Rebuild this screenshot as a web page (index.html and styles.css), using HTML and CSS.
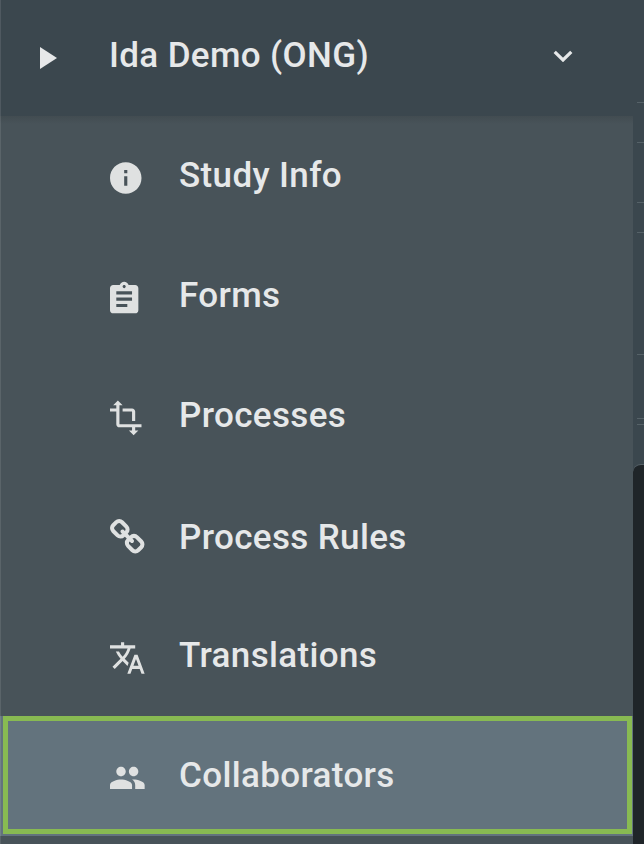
FILE: index.html
```html
<!DOCTYPE html>
<html lang="en">
  <head>
    <meta charset="UTF-8" />
    <meta name="viewport" content="width=device-width, initial-scale=1.0" />
    <title>Ida Demo (ONG)</title>
    <link rel="stylesheet" href="styles.css">
  </head>
  <body>
    <div class="sidebar">
      <header class="study">
        <svg class="study-arrow" viewBox="0 0 17 22"><path d="M0 0L17 11L0 22z" /></svg>
        <span class="study-name">Ida Demo (ONG)</span>
        <svg class="study-toggle" viewBox="0 0 20 12"><path d="M1.7 1.8L10 10L18.3 1.8" /></svg>
      </header>
      <nav class="menu">
        <a class="item">
          <svg class="icon" viewBox="2 0 24 24"><path d="M12 2C6.48 2 2 6.48 2 12s4.48 10 10 10 10-4.48 10-10S17.52 2 12 2zm1 15h-2v-6h2v6zm0-8h-2V7h2v2z" /></svg>
          <span class="label">Study Info</span>
        </a>
        <a class="item">
          <svg class="icon" viewBox="3 -0.8 24 24"><path d="M19 3h-4.18C14.4 1.84 13.3 1 12 1c-1.3 0-2.4.84-2.82 2H5c-1.1 0-2 .9-2 2v14c0 1.1.9 2 2 2h14c1.1 0 2-.9 2-2V5c0-1.1-.9-2-2-2zm-7 0c.55 0 1 .45 1 1s-.45 1-1 1-1-.45-1-1 .45-1 1-1zm2 14H7v-2h7v2zm3-4H7v-2h10v2zm0-4H7V7h10v2z" /></svg>
          <span class="label">Forms</span>
        </a>
        <a class="item">
          <svg class="icon" viewBox="2 0 24 24"><path d="M22 18v-2H8V4h2L7 1 4 4h2v2H2v2h4v8c0 1.1.9 2 2 2h8v2h-2l3 3 3-3h-2v-2h4zM10 8h6v6h2V8c0-1.1-.9-2-2-2h-6v2z" /></svg>
          <span class="label">Processes</span>
        </a>
        <a class="item rules">
          <svg class="icon" viewBox="16 16 1790 1790"><path d="M1456 1216q0-40-28-68l-208-208q-28-28-68-28-42 0-72 32 3 3 19 18.500t21.500 21.500 15 19 13 25.500 3.500 27.500q0 40-28 68t-68 28q-15 0-27.500-3.500t-25.500-13-19-15-21.500-21.500-18.500-19q-33 31-33 73 0 40 28 68l206 207q27 27 68 27 40 0 68-26l147-146q28-28 28-67zm-703-705q0-40-28-68l-206-207q-28-28-68-28-39 0-68 27l-147 146q-28 28-28 67 0 40 28 68l208 208q27 27 68 27 42 0 72-31-3-3-19-18.500t-21.500-21.500-15-19-13-25.500-3.500-27.500q0-40 28-68t68-28q15 0 27.500 3.500t25.500 13 19 15 21.500 21.500 18.500 19q33-31 33-73zm895 705q0 120-85 203l-147 146q-83 83-203 83-121 0-204-85l-206-207q-83-83-83-203 0-123 88-209l-88-88q-86 88-208 88-120 0-204-84l-208-208q-84-84-84-204t85-203l147-146q83-83 203-83 121 0 204 85l206 207q83 83 83 203 0 123-88 209l88 88q86-88 208-88 120 0 204 84l208 208q84 84 84 204z" /></svg>
          <span class="label">Process Rules</span>
        </a>
        <a class="item">
          <svg class="icon" viewBox="1 0 24 24"><path d="M12.87 15.07l-2.54-2.51.03-.03c1.74-1.94 2.98-4.17 3.71-6.53H17V4h-7V2H8v2H1v1.99h11.17C11.5 7.92 10.44 9.75 9 11.35 8.07 10.32 7.3 9.19 6.69 8h-2c.73 1.63 1.73 3.17 2.98 4.56l-5.09 5.02L4 19l5-5 3.11 3.11.76-2.04zM18.5 10h-2L12 22h2l1.12-3h4.75L21 22h2l-4.5-12zm-2.62 7l1.62-4.33L19.12 17h-3.24z" /></svg>
          <span class="label">Translations</span>
        </a>
        <a class="item active">
          <svg class="icon" viewBox="1 0 24 24"><path d="M16 11c1.66 0 2.99-1.34 2.99-3S17.66 5 16 5s-3 1.34-3 3 1.34 3 3 3zm-8 0c1.66 0 2.99-1.34 2.99-3S9.66 5 8 5 5 6.34 5 8s1.34 3 3 3zm0 2c-2.33 0-7 1.17-7 3.5V19h14v-2.5c0-2.33-4.67-3.5-7-3.5zm8 0c-.29 0-.62.02-.97.05 1.16.84 1.97 1.97 1.97 3.45V19h6v-2.5c0-2.33-4.67-3.5-7-3.5z" /></svg>
          <span class="label">Collaborators</span>
        </a>
      </nav>
    </div>
    <div class="page">
      <div class="line tall"></div>
      <div class="line"></div>
      <div class="line wide"></div>
      <div class="line short"></div>
      <div class="line huge"></div>
      <div class="line half"></div>
      <div class="line tiny"></div>
      <div class="panel"></div>
    </div>
  </body>
</html>
```
FILE: styles.css
```css
* {
  box-sizing: border-box;
}

body {
  margin: 0;
  height: 844px;
  display: flex;
  overflow: hidden;
  background: #3b474e;
  color: #e6e8e9;
  font-family: Roboto, sans-serif;
  font-size: 35px;
  font-weight: 500;
  letter-spacing: 0.36px;
  white-space: nowrap;
}

.sidebar {
  position: relative;
  width: 633px;
  background: #485359;
}
/* thin light edge along the left side */
.sidebar::before {
  content: "";
  position: absolute;
  z-index: 1;
  inset: 0 auto 0 0;
  width: 1px;
  background: rgba(255, 255, 255, 0.1);
}

.study {
  display: flex;
  align-items: center;
  height: 116px;
  padding: 0 60px 6px 40px;
  background: #3b474e;
}
.study-arrow {
  width: 17px;
  height: 22px;
  margin: 5px 52px 0 0;
  fill: #e6e8e9;
}
.study-name {
  flex: 1;
}
.study-toggle {
  width: 20px;
  height: 12px;
  margin-top: 2px;
  fill: none;
  stroke: #e6e8e9;
  stroke-width: 3.2;
}

.menu {
  background: linear-gradient(#424c51, #485359 8px);
}
.item {
  display: flex;
  align-items: center;
  height: 120px;
  padding: 0 0 2px 110px;
}
.item.rules .label {
  padding-top: 4px;
}
.item.active {
  background: #63737d;
  position: relative;
}
.item.active::after {
  content: "";
  position: absolute;
  inset: 0 1px 2px 3px;
  border: 5px solid #88ba52;
}

.icon {
  width: 37.8px;
  height: 37.8px;
  margin: 6px 31.2px 0 0;
  fill: #dfe1e1;
}

.page {
  flex: 1;
  display: flex;
  flex-direction: column;
}
.line {
  flex: none;
  height: 40px;
  margin-left: 4px;
  border-bottom: 1px solid #566268;
}
.line.tall {
  height: 103px;
}
.line.wide {
  height: 60px;
}
.line.short {
  height: 30px;
}
.line.huge {
  height: 122px;
}
.line.half {
  height: 64px;
}
.line.tiny {
  height: 6px;
}
.panel {
  flex: 1;
  margin-top: 39px;
  border-top: 1px solid #566268;
  border-top-left-radius: 8px;
  background: #1f2529;
}
```
